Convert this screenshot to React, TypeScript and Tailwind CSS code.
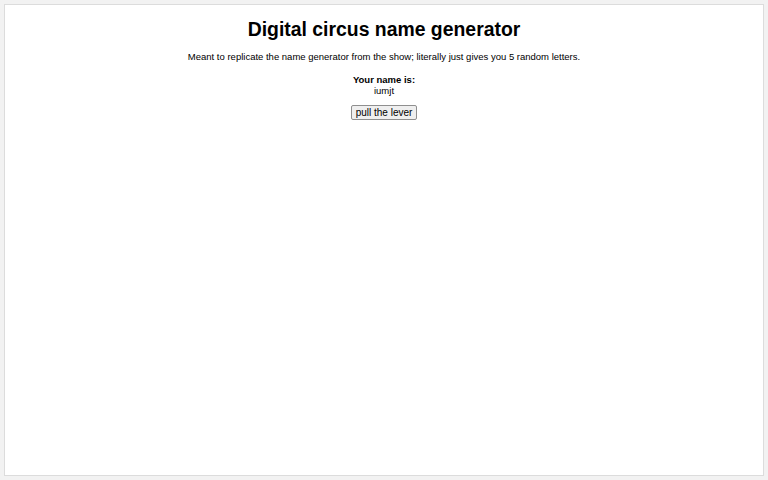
import React, { useState } from 'react';

const randomName = () => {
    const letters = 'abcdefghijklmnopqrstuvwxyz';
    let out = '';
    for (let i = 0; i < 5; i++) out += letters[Math.floor(Math.random() * letters.length)];
    return out;
};

export default function App() {
    const [name, setName] = useState('iumjt');

    return (
        <div className="w-[768px] h-[480px] bg-[#f2f2f2] p-[4px] font-['Liberation_Sans',Arial,sans-serif] text-black">
            <div className="h-full bg-white border border-[#dcdcdc] flex flex-col items-center">
                <h1 className="mt-[12px] text-[19.4px] leading-[24px] font-bold">Digital circus name generator</h1>
                <p className="mt-[10px] text-[9.5px] leading-[12px]">Meant to replicate the name generator from the show; literally just gives you 5 random letters.</p>
                <div className="mt-[11px] text-[9.5px] leading-[11px] text-center">
                    <div className="font-bold">Your name is:</div>
                    <div>{name}</div>
                </div>
                <button
                    onClick={() => setName(randomName())}
                    className="mt-[9px] h-[15px] px-[3.5px] text-[10px] leading-[12px] bg-[#efefef] border border-[#8f8f8f] rounded-[2px]"
                >
                    pull the lever
                </button>
            </div>
        </div>
    );
}
